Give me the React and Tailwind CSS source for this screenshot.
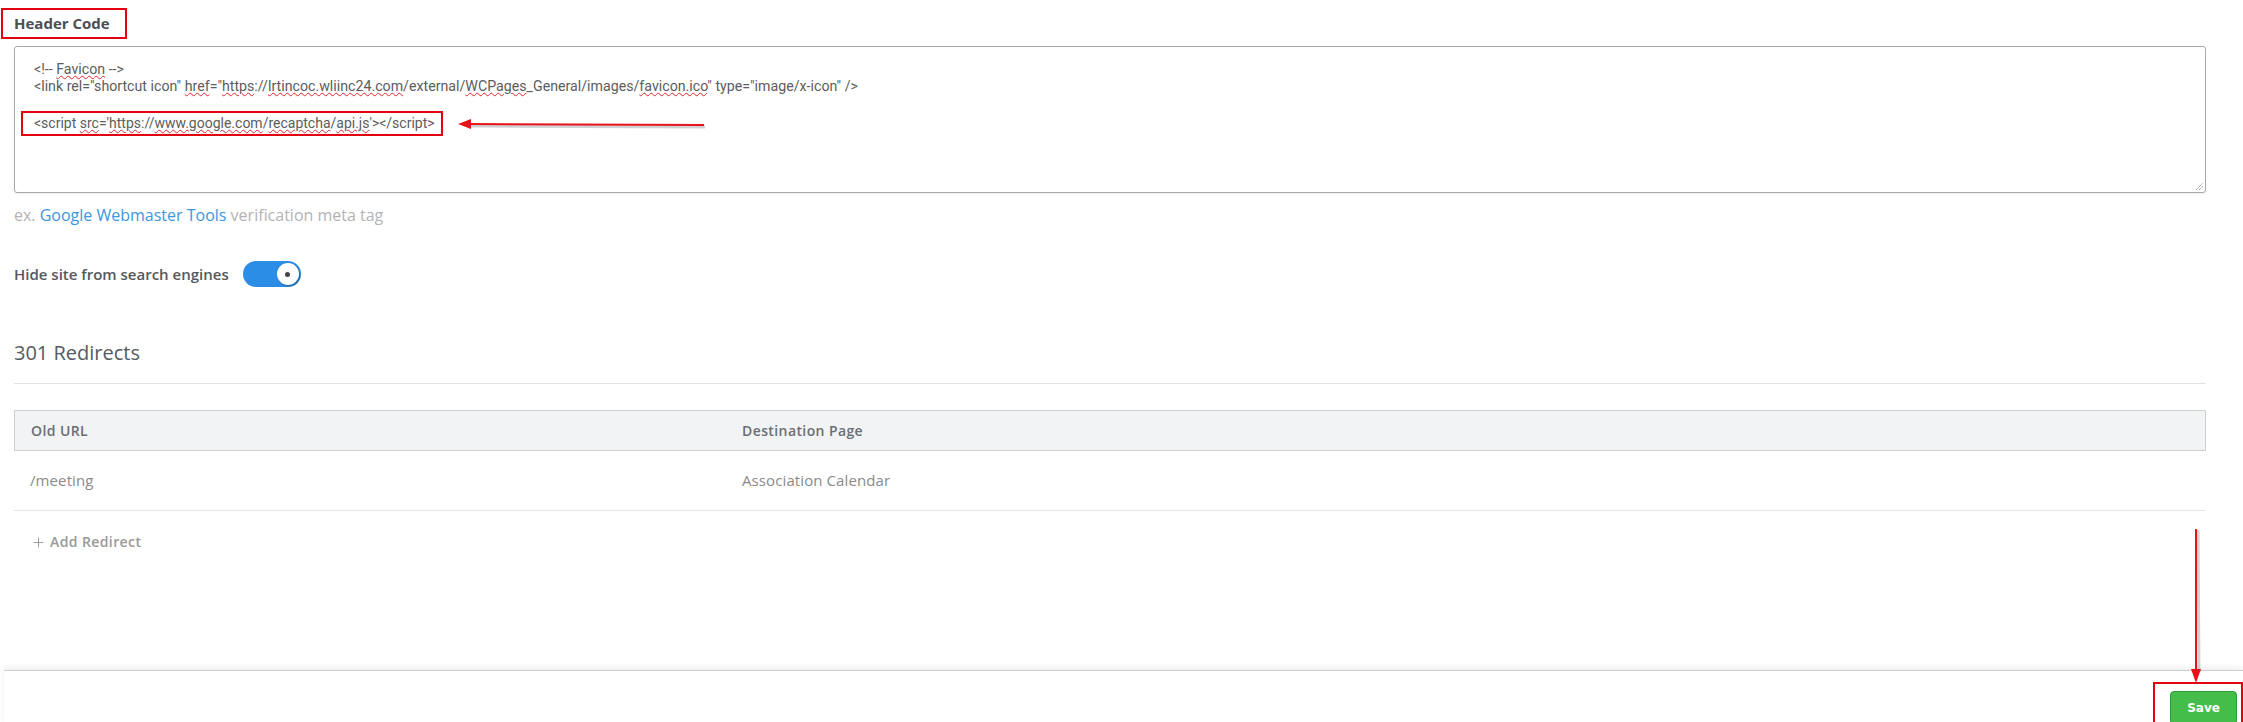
import { Plus } from 'lucide-react';

// spell-check style squiggle under a word
function Sq({ children }) {
  return (
    <span className="underline decoration-wavy decoration-[#e0262d] decoration-1 underline-offset-[1px]">
      {children}
    </span>
  );
}

function Toggle() {
  return (
    <div className="flex h-[26px] w-[58px] items-center justify-end rounded-full bg-[#2b8de6] p-[2px]">
      <div className="flex h-[22px] w-[22px] items-center justify-center rounded-full bg-white shadow-[1px_1px_2px_rgba(0,0,0,0.35)]">
        <div className="h-[5px] w-[5px] rounded-full bg-[#444]"></div>
      </div>
    </div>
  );
}

export default function App() {
  return (
    <div className="relative flex h-[722px] flex-col overflow-hidden bg-white font-['Open_Sans',sans-serif]">
      <main className="flex-1 pl-[14px] pr-[37px] pt-[8px]">
        <div className="-ml-[13px] inline-flex h-[31px] items-center border-2 border-[#e3000f] pl-[11px] pr-[15px] text-[15px] font-bold text-[#4b4f54]">
          Header Code
        </div>

        <div className="relative mt-[7px] h-[147px] rounded-[3px] border border-[#a9a9a9] px-[19px] pt-[14px] font-['Roboto',sans-serif] text-[14.2px] leading-[17px] text-[#5c5c5c] shadow-[0_1px_2px_rgba(0,0,0,0.08)]">
          <div>&lt;!-- <Sq>Favicon</Sq> --&gt;</div>
          <div>
            &lt;link rel="shortcut icon" <Sq>href</Sq>="<Sq>https</Sq>://<Sq>lrtincoc.wliinc24.com</Sq>/external/<Sq>WCPages</Sq>_General/images/<Sq>favicon.ico</Sq>" type="image/x-icon" /&gt;
          </div>
          <div className="-ml-[13px] mt-[16px] inline-flex h-[25px] items-center border-2 border-[#e3000f] pl-[11px] pr-[6px] text-[14px]">
            <span>
              &lt;script <Sq>src</Sq>='<Sq>https</Sq>://<Sq>www.google.com</Sq>/<Sq>recaptcha</Sq>/<Sq>api.js</Sq>'&gt;&lt;/script&gt;
            </span>
          </div>
          <svg className="absolute bottom-[1px] right-[1px]" width="9" height="9" viewBox="0 0 9 9">
            <line x1="1" y1="8" x2="8" y2="1" stroke="#777" strokeWidth="1" strokeDasharray="1 1" />
            <line x1="4" y1="8" x2="8" y2="4" stroke="#777" strokeWidth="1" strokeDasharray="1 1" />
          </svg>
        </div>

        <p className="mt-[12px] text-[16px] leading-[20px] text-[#b3b3b3]">
          ex. <span className="text-[#3d96e0]">Google Webmaster Tools</span> verification meta tag
        </p>

        <div className="mt-[36px] flex items-center gap-[14px]">
          <span className="text-[15px] font-semibold text-[#54585d]">Hide site from search engines</span>
          <Toggle />
        </div>

        <h2 className="mt-[52px] border-b border-[#e2e2e2] pb-[16px] text-[20px] leading-[28px] text-[#545a60]">
          301 Redirects
        </h2>

        <div className="mt-[26px]">
          <div className="grid h-[41px] grid-cols-[711px_1fr] items-center border border-[#cfcfcf] bg-[#f2f3f5] text-[14px] font-semibold tracking-[0.4px] text-[#6b6e72]">
            <div className="pl-[16px]">Old URL</div>
            <div className="pl-[16px]">Destination Page</div>
          </div>
          <div className="grid h-[60px] grid-cols-[711px_1fr] items-center border-b border-[#e6e6e6] text-[15px] tracking-[0.1px] text-[#8a8a8a]">
            <div className="pl-[16px]">/meeting</div>
            <div className="pl-[17px]">Association Calendar</div>
          </div>
        </div>

        <button className="mt-[21px] flex items-center gap-[4px] pl-[17px] text-[14px] font-semibold leading-[20px] tracking-[0.4px] text-[#999]">
          <Plus size={15} strokeWidth={1.5} />
          Add Redirect
        </button>
      </main>

      <footer className="ml-[4px] flex h-[52px] shrink-0 justify-end overflow-hidden border-t border-[#cdcdcd] pt-[11px] shadow-[0_-2px_6px_rgba(0,0,0,0.08)]">
        <div className="border-x-2 border-t-2 border-[#e3000f] pl-[15px] pr-[4px] pt-[7px]">
          <button className="h-[34px] w-[67px] rounded-[4px] border border-[#2f9e3a] bg-[#45bd4b] font-['DejaVu_Sans',sans-serif] text-[12px] font-bold text-white">
            Save
          </button>
        </div>
      </footer>

      {/* annotation arrows */}
      <svg className="absolute left-[455px] top-[116px]" width="256" height="18" viewBox="0 0 256 18">
        <line x1="14" y1="10" x2="250" y2="11" stroke="rgba(0,0,0,0.18)" strokeWidth="3" />
        <line x1="12" y1="8" x2="249" y2="9" stroke="#e8121a" strokeWidth="2" />
        <polygon points="3,8 16,3 16,13" fill="#e8121a" />
      </svg>
      <svg className="absolute left-[2188px] top-[526px]" width="18" height="160" viewBox="0 0 18 160">
        <line x1="10" y1="4" x2="11" y2="146" stroke="rgba(0,0,0,0.18)" strokeWidth="3" />
        <line x1="8" y1="3" x2="8" y2="146" stroke="#e8121a" strokeWidth="2" />
        <polygon points="8,157 3,143 13,143" fill="#e8121a" />
      </svg>
    </div>
  );
}
